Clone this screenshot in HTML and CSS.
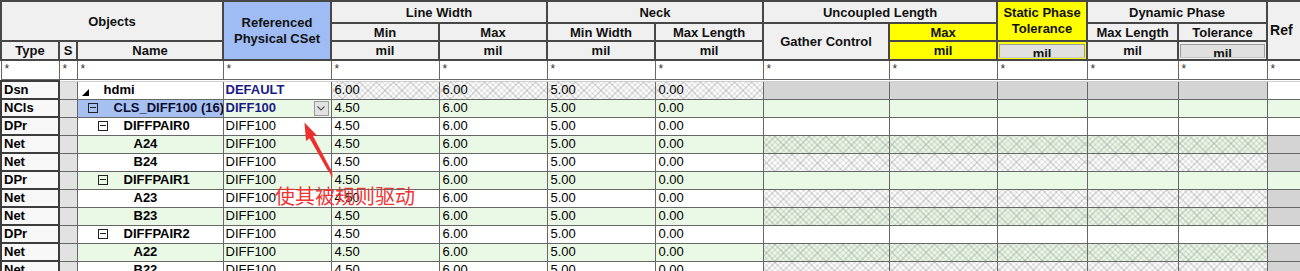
FILE: index.html
```html
<!DOCTYPE html>
<html>
<head>
<meta charset="utf-8">
<link rel="stylesheet" href="styles.css">
</head>
<body>
<div class="wrap">
<table class="grid">
<colgroup>
<col class="c-type"><col class="c-s"><col class="c-name"><col class="c-ref">
<col class="c-108"><col class="c-108"><col class="c-108"><col class="c-108">
<col class="c-gather"><col class="c-108"><col class="c-spt"><col class="c-dml"><col class="c-dtol"><col class="c-rel">
</colgroup>
<thead>
<tr class="ha">
<th colspan="3" rowspan="2">Objects</th>
<th rowspan="3" class="blue">Referenced<br>Physical CSet</th>
<th colspan="2">Line Width</th>
<th colspan="2">Neck</th>
<th colspan="2">Uncoupled Length</th>
<th rowspan="2" class="yel two">Static Phase<br>Tolerance</th>
<th colspan="2">Dynamic Phase</th>
<th rowspan="3" class="left">Ref</th>
</tr>
<tr class="hb">
<th>Min</th><th>Max</th><th>Min Width</th><th>Max Length</th>
<th rowspan="2">Gather Control</th>
<th class="yel">Max</th>
<th>Max Length</th><th>Tolerance</th>
</tr>
<tr class="hc">
<th>Type</th><th>S</th><th>Name</th>
<th>mil</th><th>mil</th><th>mil</th><th>mil</th>
<th class="yel">mil</th>
<th class="yel boxed"><div class="milbox">mil</div></th>
<th>mil</th>
<th class="boxed"><div class="milbox">mil</div></th>
</tr>
</thead>
<tbody>
<tr class="filter">
<td>*</td><td>*</td><td>*</td><td>*</td><td>*</td><td>*</td><td>*</td><td>*</td><td>*</td><td>*</td><td>*</td><td>*</td><td>*</td><td>*</td>
</tr>
<tr class="gap"><td colspan="14"></td></tr>

<tr class="r-w">
<td class="ty">Dsn</td><td class="s"></td>
<td class="nm l0"><span class="tri"></span><b>hdmi</b></td>
<td class="ref navy">DEFAULT</td>
<td class="hx">6.00</td><td class="hx">6.00</td><td class="hx">5.00</td><td class="hx">0.00</td>
<td class="gr"></td><td class="gr"></td><td class="gr"></td><td class="gr"></td><td class="gr"></td>
<td></td>
</tr>
<tr class="r-g">
<td class="ty">NCls</td><td class="s"></td>
<td class="nm l1 hl"><span class="mbox"></span><b>CLS_DIFF100 (16)</b></td>
<td class="ref navy sel">DIFF100<span class="selframe"></span><span class="ddbtn"><svg width="12" height="12" viewBox="0 0 12 12"><path d="M2.5 4.5 L6 8 L9.5 4.5" fill="none" stroke="#555" stroke-width="1.1"/></svg></span></td>
<td>4.50</td><td>6.00</td><td>5.00</td><td>0.00</td>
<td></td><td></td><td></td><td></td><td></td>
<td></td>
</tr>
<tr class="r-w">
<td class="ty">DPr</td><td class="s"></td>
<td class="nm l2"><span class="mbox"></span><b>DIFFPAIR0</b></td>
<td class="ref">DIFF100</td>
<td>4.50</td><td>6.00</td><td>5.00</td><td>0.00</td>
<td></td><td></td><td></td><td></td><td></td>
<td></td>
</tr>
<tr class="r-g">
<td class="ty">Net</td><td class="s"></td>
<td class="nm l3"><b>A24</b></td>
<td class="ref">DIFF100</td>
<td>4.50</td><td>6.00</td><td>5.00</td><td>0.00</td>
<td class="hx"></td><td class="hx"></td><td class="hx"></td><td class="hx"></td><td class="hx"></td>
<td class="gr"></td>
</tr>
<tr class="r-w">
<td class="ty">Net</td><td class="s"></td>
<td class="nm l3"><b>B24</b></td>
<td class="ref">DIFF100</td>
<td>4.50</td><td>6.00</td><td>5.00</td><td>0.00</td>
<td class="hx"></td><td class="hx"></td><td class="hx"></td><td class="hx"></td><td class="hx"></td>
<td class="gr"></td>
</tr>
<tr class="r-g">
<td class="ty">DPr</td><td class="s"></td>
<td class="nm l2"><span class="mbox"></span><b>DIFFPAIR1</b></td>
<td class="ref">DIFF100</td>
<td>4.50</td><td>6.00</td><td>5.00</td><td>0.00</td>
<td></td><td></td><td></td><td></td><td></td>
<td></td>
</tr>
<tr class="r-w">
<td class="ty">Net</td><td class="s"></td>
<td class="nm l3"><b>A23</b></td>
<td class="ref">DIFF100</td>
<td>4.50</td><td>6.00</td><td>5.00</td><td>0.00</td>
<td class="hx"></td><td class="hx"></td><td class="hx"></td><td class="hx"></td><td class="hx"></td>
<td class="gr"></td>
</tr>
<tr class="r-g">
<td class="ty">Net</td><td class="s"></td>
<td class="nm l3"><b>B23</b></td>
<td class="ref">DIFF100</td>
<td>4.50</td><td>6.00</td><td>5.00</td><td>0.00</td>
<td class="hx"></td><td class="hx"></td><td class="hx"></td><td class="hx"></td><td class="hx"></td>
<td class="gr"></td>
</tr>
<tr class="r-w">
<td class="ty">DPr</td><td class="s"></td>
<td class="nm l2"><span class="mbox"></span><b>DIFFPAIR2</b></td>
<td class="ref">DIFF100</td>
<td>4.50</td><td>6.00</td><td>5.00</td><td>0.00</td>
<td></td><td></td><td></td><td></td><td></td>
<td></td>
</tr>
<tr class="r-g">
<td class="ty">Net</td><td class="s"></td>
<td class="nm l3"><b>A22</b></td>
<td class="ref">DIFF100</td>
<td>4.50</td><td>6.00</td><td>5.00</td><td>0.00</td>
<td class="hx"></td><td class="hx"></td><td class="hx"></td><td class="hx"></td><td class="hx"></td>
<td class="gr"></td>
</tr>
<tr class="r-w">
<td class="ty">Net</td><td class="s"></td>
<td class="nm l3"><b>B22</b></td>
<td class="ref">DIFF100</td>
<td>4.50</td><td>6.00</td><td>5.00</td><td>0.00</td>
<td class="hx"></td><td class="hx"></td><td class="hx"></td><td class="hx"></td><td class="hx"></td>
<td class="gr"></td>
</tr>
</tbody>
</table>

<svg class="arrow" width="1300" height="271" viewBox="0 0 1300 271">
<path d="M304.5 122.5 L317 135.5 L312.8 135.6 L330 168 Q333.5 173 332 178 Q330 172 327.5 170 L309.6 138.2 L306 141 Z" fill="#ef2f2f"/>
</svg>
<div class="note">使其被规则驱动</div>
</div>
</body>
</html>
```
FILE: styles.css
```css
html, body {
  margin: 0;
  padding: 0;
  background: #ffffff;
}
body {
  font-family: "Liberation Sans", Arial, sans-serif;
  font-size: 13px;
  color: #000;
  overflow: hidden;
}
.wrap {
  position: relative;
  width: 1300px;
  height: 271px;
  overflow: hidden;
}
.grid {
  border-collapse: collapse;
  table-layout: fixed;
  width: 1386px;
}
.c-type { width: 58px; }
.c-s { width: 18px; }
.c-name { width: 146px; }
.c-ref { width: 108px; }
.c-108 { width: 108px; }
.c-gather { width: 126px; }
.c-spt { width: 90px; }
.c-dml { width: 91px; }
.c-dtol { width: 89px; }
.c-rel { width: 120px; }

th, td {
  padding: 0 3px;
  white-space: nowrap;
  overflow: hidden;
}
th {
  background: #f0f0f0;
  font-weight: bold;
  text-align: center;
  border: 2px solid #474747;
  line-height: 15px;
  color: #111;
}
.ha { height: 22px; }
.hb { height: 18px; }
.hc { height: 19px; }
th.blue { background: #9fbcf4; line-height: 16px; padding-top: 1px; }
th.yel { background: #ffff00; }
th.two { line-height: 16px; vertical-align: top; padding-top: 3px; }
th.left { text-align: left; padding-left: 2px; font-size: 14px; }
th.boxed { padding: 0 1px; vertical-align: top; }
.milbox {
  margin-top: 2px;
  height: 12px;
  line-height: 17px;
  overflow: hidden;
  background: #e0e0e0;
  border: 1px solid #9c9c9c;
  border-bottom-color: #c8c8c8;
}

td {
  border: 1px solid #676767;
  height: 16px;
  line-height: 16px;
  padding-top: 0;
  padding-bottom: 0;
  padding-left: 3px;
}
.filter td {
  height: 16px;
  vertical-align: top;
  font-size: 12px;
  line-height: 13px;
  padding-top: 2px;
  color: #333;
  background: #fff;
}
.gap td {
  height: 0;
  padding: 0;
  background: #d2d2d2;
  border-left: none;
  border-right: none;
  border-color: #cfcfcf;
}

.r-w { background: #ffffff; }
.r-g { background: #eaf8e6; }

td.ty {
  font-weight: bold;
  background: #f8f8f8;
  border: 2px solid #3c3c3c;
  padding-left: 2px;
}
td.s { background: #e2e2e2; }
td.nm b { font-weight: bold; }
td.l0 { padding-left: 4px; }
td.l1 { padding-left: 10px; }
td.l2 { padding-left: 20px; }
td.l3 { padding-left: 56px; }
td.hl { background: #a6c1f1; color: #0c0c30; }
.tri {
  display: inline-block;
  width: 0;
  height: 0;
  border-left: 7px solid transparent;
  border-bottom: 7px solid #000;
  margin-right: 15px;
  vertical-align: -2px;
}
.mbox {
  display: inline-block;
  position: relative;
  width: 8px;
  height: 8px;
  border: 1px solid #222;
  margin-right: 16px;
  vertical-align: -1px;
}
.mbox::after {
  content: "";
  position: absolute;
  left: 1px;
  right: 1px;
  top: 3px;
  height: 1px;
  background: #222;
}
td.ref { padding-left: 2px; }
td.navy { color: #1a1a86; font-weight: bold; }
td.sel { position: relative; }
.selframe {
  position: absolute;
  left: -1px;
  top: -1px;
  right: -1px;
  bottom: -1px;
  border: 1px solid #1e1e1e;
}
.ddbtn {
  position: absolute;
  right: 2px;
  top: 1px;
  width: 13px;
  height: 13px;
  background: #e2e2e2;
  border: 1px solid #9a9a9a;
  display: flex;
  align-items: center;
  justify-content: center;
}
td.hx {
  background-image:
    repeating-linear-gradient(45deg, transparent 0 3px, rgba(150,150,150,0.45) 3px 4px),
    repeating-linear-gradient(-45deg, transparent 0 3px, rgba(150,150,150,0.45) 3px 4px);
}
td.gr { background-color: #d4d4d4; }

.arrow {
  position: absolute;
  left: 0;
  top: 0;
  pointer-events: none;
}
.note {
  position: absolute;
  left: 275px;
  top: 184px;
  font-family: "Noto Sans CJK SC", "Noto Sans", sans-serif;
  font-size: 20px;
  line-height: 24px;
  color: #ee3434;
  letter-spacing: 0;
  pointer-events: none;
}
```
